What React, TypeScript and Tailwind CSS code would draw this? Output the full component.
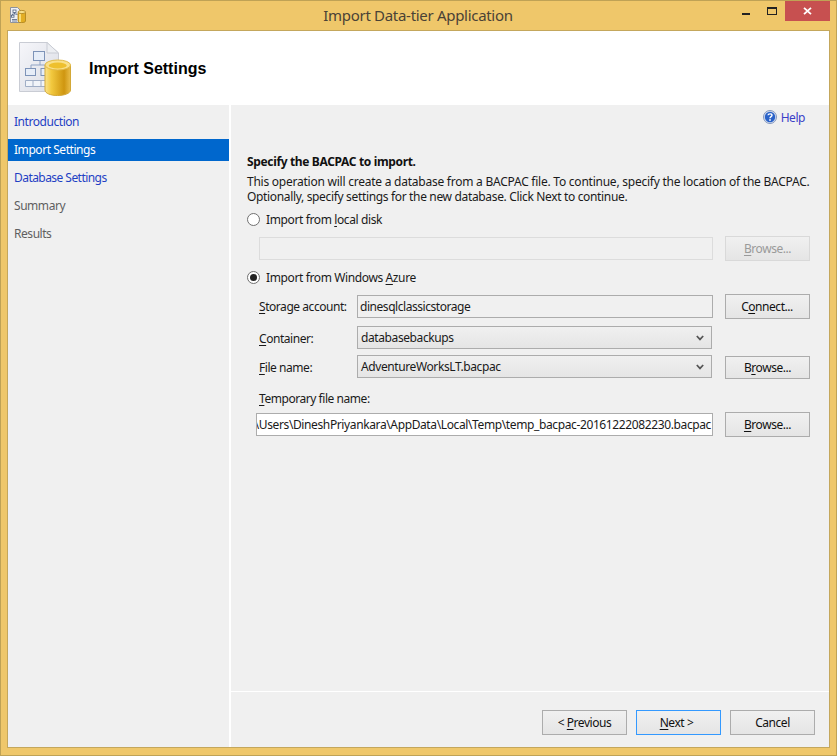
import type { ReactNode } from 'react';

const navItems = [
  { label: 'Introduction', tone: 'link' },
  { label: 'Import Settings', tone: 'active' },
  { label: 'Database Settings', tone: 'link' },
  { label: 'Summary', tone: 'muted' },
  { label: 'Results', tone: 'muted' },
];

// Document with org chart + yellow database cylinder for the page header
const WizardIcon = () => (
  <svg viewBox="0 0 52 54" className="ml-[11px] mt-[2px] h-[54px] w-[52px]">
    <defs>
      <linearGradient id="page" x1="0" y1="0" x2="1" y2="1">
        <stop offset="0" stopColor="#f6f6fa" />
        <stop offset="1" stopColor="#d9dce4" />
      </linearGradient>
      <linearGradient id="can" x1="0" y1="0" x2="1" y2="0">
        <stop offset="0" stopColor="#fbe48c" />
        <stop offset="0.25" stopColor="#f2c93f" />
        <stop offset="0.75" stopColor="#cf9610" />
        <stop offset="1" stopColor="#e9bd4a" />
      </linearGradient>
    </defs>
    <path d="M0.5 0.5H28L39.5 11V49.5H0.5Z" fill="url(#page)" stroke="#c9ccd4" />
    <path d="M28 0.5V11H39.5Z" fill="#eceef2" stroke="#c9ccd4" />
    <path d="M21 19V23M12 30V23H31V30" fill="none" stroke="#8fa3c4" />
    <rect x="14.5" y="9.5" width="11" height="9" fill="#e6edf8" stroke="#7d93b8" />
    <rect x="6.5" y="26.5" width="10" height="7" fill="#e6edf8" stroke="#7d93b8" />
    <rect x="22" y="26.5" width="9" height="7" fill="#e6edf8" stroke="#7d93b8" />
    <path d="M6.5 38.5H30V44.5H6.5ZM14 38.5V44.5M22 38.5V44.5" fill="#f1f4f9" stroke="#a0aec6" />
    <path d="M26 23V48C26 51.5 32 53.5 38.5 53.5S51.5 51.5 51.5 48V23Z" fill="url(#can)" stroke="#d3a837" />
    <ellipse cx="38.75" cy="23" rx="12.75" ry="5" fill="#f9e08a" stroke="#e2bb48" />
    <ellipse cx="38.75" cy="23.5" rx="9" ry="3" fill="#eec02e" />
  </svg>
);

// Titlebar version: same picture, redrawn with harder lines for 16px
const SmallIcon = () => (
  <svg viewBox="0 0 16 16" className="ml-[9px] mt-[6px] h-[16px] w-[16px]">
    <path d="M0.5 0.5H7.5L10.5 3.5V15.5H0.5Z" fill="#eef0f5" stroke="#8d929c" />
    <rect x="3" y="3" width="3" height="2.5" fill="#fff" stroke="#4c5f80" strokeWidth="0.8" />
    <path d="M4.5 5.5V7M2.5 8V7H7V8" fill="none" stroke="#4c5f80" strokeWidth="0.8" />
    <rect x="1.5" y="8.2" width="2.5" height="2" fill="#fff" stroke="#4c5f80" strokeWidth="0.8" />
    <path d="M2 12.5H7M2 14H7" stroke="#6f7d96" />
    <path d="M8 5.5V14C8 15 9.5 15.6 11.7 15.6S15.5 15 15.5 14V5.5Z" fill="#e3ae24" stroke="#a9801c" strokeWidth="0.8" />
    <path d="M9 6.5H11V15H9Z" fill="#f8dc78" />
    <ellipse cx="11.75" cy="5" rx="3.75" ry="1.6" fill="#f8e08c" stroke="#a9801c" strokeWidth="0.8" />
  </svg>
);

const HelpIcon = () => (
  <svg viewBox="0 0 14 14" className="h-[14px] w-[14px]">
    <circle cx="7" cy="7" r="6.5" fill="#d5dff0" stroke="#8497bd" />
    <circle cx="7" cy="7" r="5.2" fill="#2a62c8" />
    <path d="M5 5.3C5.2 3.4 9 3.3 9 5.3C9 6.7 7 6.6 7 8.3" fill="none" stroke="#fff" strokeWidth="1.4" />
    <rect x="6.2" y="9.2" width="1.6" height="1.6" fill="#fff" />
  </svg>
);

const Key = ({ children }: { children: ReactNode }) => (
  <span className="underline underline-offset-2">{children}</span>
);

const Button = ({ children, className = 'h-[25px] border-[#acacac] text-[#111]' }: { children: ReactNode; className?: string }) => (
  <div className={`flex w-[85px] shrink-0 items-center justify-center border bg-gradient-to-b from-[#f0f0f0] to-[#e5e5e5] ${className}`}>
    {children}
  </div>
);

const Radio = ({ checked, children }: { checked?: boolean; children: ReactNode }) => (
  <div className="flex h-4 items-center gap-[6px] tracking-[-0.38px] text-[#1a1a1a]">
    <span className="flex h-[13px] w-[13px] items-center justify-center rounded-full border border-[#707070] bg-white">
      {checked && <span className="h-[7px] w-[7px] rounded-full bg-[#222]" />}
    </span>
    <span>{children}</span>
  </div>
);

const Select = ({ value }: { value: string }) => (
  <div className="flex h-[23px] w-[355px] items-center justify-between border border-[#acacac] bg-gradient-to-b from-[#f0f0f0] to-[#e5e5e5] pl-[3px] pr-[7px] tracking-[-0.4px] text-[#1a1a1a]">
    <span>{value}</span>
    <svg viewBox="0 0 8 6" className="h-[6px] w-[8px]">
      <path d="M0.8 1L4 4.4L7.2 1" fill="none" stroke="#555" strokeWidth="1.7" />
    </svg>
  </div>
);

export default function App() {
  return (
    <div className="flex h-[756px] w-[837px] flex-col overflow-hidden border border-[#bfa255] bg-[#efc76a] font-['Noto_Sans',sans-serif] text-[12px] leading-[15px] tracking-[-0.45px]">
      {/* Title bar */}
      <div className="flex h-[29px] shrink-0 items-start">
        <SmallIcon />
        <div className="flex h-[29px] flex-1 items-center justify-center pl-[77px] text-[15px] tracking-[-0.3px] text-[#4a4236]">
          Import Data-tier Application
        </div>
        <div className="mr-[6px] flex items-start">
          <div className="flex h-[20px] w-[26px] items-center justify-center">
            <span className="mt-[5px] h-[2px] w-[8px] bg-[#222]" />
          </div>
          <div className="flex h-[20px] w-[26px] items-center justify-center">
            <span className="h-[8px] w-[10px] border border-t-2 border-[#222]" />
          </div>
          <div className="flex h-[20px] w-[45px] items-center justify-center bg-[#c75050]">
            <svg viewBox="0 0 9 8" className="h-[8px] w-[9px]">
              <path d="M1 0.8L8 7.2M8 0.8L1 7.2" stroke="#fff" strokeWidth="1.8" />
            </svg>
          </div>
        </div>
      </div>

      {/* Client area */}
      <div className="mx-[6px] flex min-h-0 flex-1 flex-col border border-[#c4a75c]">
        <div className="flex h-[74px] shrink-0 items-center bg-white">
          <WizardIcon />
          <h1 className="ml-[18px] font-['Liberation_Sans',sans-serif] text-[16px] font-bold tracking-normal text-black">Import Settings</h1>
        </div>

        <div className="flex min-h-0 flex-1 bg-white">
          {/* Wizard steps */}
          <nav className="flex w-[221px] shrink-0 flex-col gap-[6px] bg-[#f0f0f0] pt-[6px]">
            {navItems.map((item) => (
              <div
                key={item.label}
                className={`flex h-[22px] items-center pb-[2px] pl-[6px] ${
                  item.tone === 'active'
                    ? 'bg-[#0067cd] text-white'
                    : item.tone === 'link'
                      ? 'text-[#1f3fc4]'
                      : 'text-[#5f5f5f]'
                }`}
              >
                <span className={item.label === 'Database Settings' ? 'tracking-[-0.55px]' : ''}>{item.label}</span>
              </div>
            ))}
          </nav>

          {/* Page content */}
          <div className="ml-[2px] flex min-w-0 flex-1 flex-col bg-[#f0f0f0]">
            <div className="mt-[4px] flex h-4 items-center justify-end gap-[4px] pr-[24px] text-[#3a3fc8]">
              <HelpIcon />
              <span>Help</span>
            </div>

            <div className="flex flex-col pl-[16px] pr-[19px]">
              <h2 className="mt-[29px] h-4 font-bold tracking-[-0.35px] text-[#111]">Specify the BACPAC to import.</h2>
              <p className="mt-[4px] text-[#1a1a1a]">
                <span className="block whitespace-nowrap tracking-[-0.24px]">
                  This operation will create a database from a BACPAC file. To continue, specify the location of the BACPAC.
                </span>
                <span className="block whitespace-nowrap tracking-[-0.34px]">
                  Optionally, specify settings for the new database. Click Next to continue.
                </span>
              </p>

              <div className="mt-[7px]">
                <Radio>
                  Import from <Key>l</Key>ocal disk
                </Radio>
              </div>
              <div className="mt-[9px] flex items-center justify-between pl-[12px]">
                <div className="h-[23px] w-[454px] border border-[#dcdcdc] bg-[#f0f0f0]" />
                <Button className="h-[25px] border-[#d9d9d9] text-[#9a9a9a]">
                  <span>
                    <Key>B</Key>rowse...
                  </span>
                </Button>
              </div>

              <div className="mt-[8px]">
                <Radio checked>
                  Import from Windows <Key>A</Key>zure
                </Radio>
              </div>

              <div className="mt-[9px] flex items-center pl-[12px]">
                <span className="w-[98px] shrink-0 text-[#1a1a1a]">
                  <Key>S</Key>torage account:
                </span>
                <div className="flex h-[23px] flex-1 items-center border border-[#acacac] bg-[#f0f0f0] pl-[2px] text-[#1a1a1a]">
                  dinesqlclassicstorage
                </div>
                <div className="ml-[12px]">
                  <Button>
                    <span className="mr-px">
                      C<Key>o</Key>nnect...
                    </span>
                  </Button>
                </div>
              </div>

              <div className="mt-[7px] flex items-center pl-[12px]">
                <span className="mt-[2px] w-[98px] shrink-0 text-[#1a1a1a]">
                  <Key>C</Key>ontainer:
                </span>
                <Select value="databasebackups" />
              </div>

              <div className="mt-[6px] flex items-start pl-[12px]">
                <span className="mt-[5px] w-[98px] shrink-0 text-[#1a1a1a]">
                  <Key>F</Key>ile name:
                </span>
                <Select value="AdventureWorksLT.bacpac" />
                <div className="ml-[13px] mt-px">
                  <Button className="h-[23px] border-[#acacac] text-[#111]">
                    <span>
                      B<Key>r</Key>owse...
                    </span>
                  </Button>
                </div>
              </div>

              <div className="mt-[12px] h-4 pl-[12px] text-[#1a1a1a]">
                <Key>T</Key>emporary file name:
              </div>

              <div className="mt-[5px] flex items-center pl-[9px]">
                <div className="flex h-[23px] w-[457px] items-center justify-end overflow-hidden whitespace-nowrap border border-[#acacac] bg-white pr-[1px] tracking-[-0.38px] text-[#1a1a1a]">
                  C:\Users\DineshPriyankara\AppData\Local\Temp\temp_bacpac-20161222082230.bacpac
                </div>
                <div className="ml-[12px]">
                  <Button>
                    <span>
                      <Key>B</Key>rowse...
                    </span>
                  </Button>
                </div>
              </div>
            </div>

            <div className="flex-1" />

            {/* Footer */}
            <div className="flex justify-end gap-[9px] border-t border-white pb-[12px] pr-[14px] pt-[18px]">
              <Button>
                <span>
                  &lt; <Key>P</Key>revious
                </span>
              </Button>
              <Button className="h-[25px] border-[#3399ff] pr-[4px] text-[#111]">
                <span>
                  <Key>N</Key>ext &gt;
                </span>
              </Button>
              <Button>Cancel</Button>
            </div>
          </div>
        </div>
      </div>
      <div className="h-[7px] shrink-0" />
    </div>
  );
}
